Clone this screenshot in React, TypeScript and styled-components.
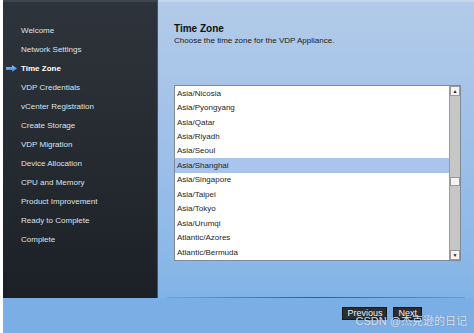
import { createGlobalStyle, styled } from "styled-components"

const GlobalStyle = createGlobalStyle`
  html, body {
    margin: 0;
    padding: 0;
    background: #ffffff;
  }
  body {
    font-family: "Liberation Sans", Arial, sans-serif;
  }
`

const Window = styled.div`
  width: 471px;
  height: 333px;
  margin-left: 3px;
  display: flex;
  flex-direction: column;
  background: linear-gradient(180deg, #b3cbe8 0%, #a3c2e8 35%, #8cb9e8 75%, #79aee7 100%);
  overflow: hidden;
  position: relative;
`

const Main = styled.div`
  height: 298px;
  display: flex;
`

const Sidebar = styled.nav`
  width: 155px;
  box-sizing: border-box;
  padding-top: 19px;
  background: linear-gradient(180deg, #2e343b 0%, #262b32 50%, #1c2026 100%);
  border-top: 2px solid #3e454d;
  border-right: 1px solid #4a525c;
  display: flex;
  flex-direction: column;
`

const Step = styled.div<{ $active?: boolean }>`
  height: 19px;
  display: flex;
  align-items: center;
  padding-left: 18px;
  position: relative;
  font-size: 8px;
  color: ${(p) => (p.$active ? "#ffffff" : "#dde2e8")};
  font-weight: ${(p) => (p.$active ? "bold" : "normal")};
`

const StepArrow = styled.svg`
  position: absolute;
  left: 3px;
  top: 6px;
`

const Content = styled.section`
  flex: 1;
  display: flex;
  flex-direction: column;
  padding: 22px 13px 0 16px;
  border-top: 2px solid #c6d7ec;
`

const Title = styled.h1`
  margin: 0;
  font-size: 10px;
  line-height: 12px;
  font-weight: bold;
  color: #111111;
  margin-top: -1px;
`

const Subtitle = styled.p`
  margin: 1px 0 0;
  font-size: 8px;
  line-height: 10px;
  color: #1a1a1a;
`

const ListBox = styled.div`
  margin-top: 39px;
  display: flex;
  border: 1px solid #7f8a96;
  background: #ffffff;
  height: 174px;
`

const Rows = styled.ul`
  flex: 1;
  margin: 0;
  padding: 0;
  list-style: none;
`

const Row = styled.li<{ $selected?: boolean }>`
  height: 14.45px;
  display: flex;
  align-items: center;
  padding-left: 2px;
  font-size: 8px;
  color: #1e1e1e;
  background: ${(p) => (p.$selected ? "#a9c5ed" : "transparent")};
`

const Scrollbar = styled.div`
  width: 10px;
  display: flex;
  flex-direction: column;
  background: #c6c6c6;
  border-left: 1px solid #9a9a9a;
`

const ScrollButton = styled.div`
  height: 10px;
  box-sizing: border-box;
  border: 1px solid #9a9a9a;
  background: #f4f4f4;
  display: flex;
  align-items: center;
  justify-content: center;
  font-size: 5px;
  color: #222;
  line-height: 1;
`

const Track = styled.div`
  flex: 1;
  display: flex;
  flex-direction: column;
  padding-top: 81px;
`

const Thumb = styled.div`
  height: 9px;
  box-sizing: border-box;
  border: 1px solid #9a9a9a;
  background: #f2f2f2;
`

const Divider = styled.div`
  margin-top: auto;
  margin-left: -7px;
  margin-right: -4px;
  height: 1px;
  background: linear-gradient(90deg, rgba(60, 100, 150, 0.2) 0%, #2f5d92 50%, rgba(60, 100, 150, 0.3) 100%);
`

const Footer = styled.footer`
  flex: 1;
  display: flex;
  justify-content: flex-end;
  align-items: flex-start;
  gap: 6px;
  padding: 9px 52px 0 0;
  background: #7caee6;
`

const Button = styled.button`
  height: 13px;
  padding: 0 4px;
  border: 1px solid #15181b;
  background: #2a2e33;
  color: #f2f2f2;
  font-family: "Liberation Sans", Arial, sans-serif;
  font-size: 9px;
  line-height: 11px;
`

const Watermark = styled.div`
  position: absolute;
  right: 7px;
  bottom: 5px;
  font-family: "Liberation Sans", "Noto Sans CJK SC", sans-serif;
  font-size: 11px;
  color: rgba(255, 255, 255, 0.8);
  text-shadow: 0 0 1px rgba(60, 80, 110, 0.6);
  pointer-events: none;
`

const steps = [
  "Welcome",
  "Network Settings",
  "Time Zone",
  "VDP Credentials",
  "vCenter Registration",
  "Create Storage",
  "VDP Migration",
  "Device Allocation",
  "CPU and Memory",
  "Product Improvement",
  "Ready to Complete",
  "Complete",
]

const zones = [
  "Asia/Nicosia",
  "Asia/Pyongyang",
  "Asia/Qatar",
  "Asia/Riyadh",
  "Asia/Seoul",
  "Asia/Shanghai",
  "Asia/Singapore",
  "Asia/Taipei",
  "Asia/Tokyo",
  "Asia/Urumqi",
  "Atlantic/Azores",
  "Atlantic/Bermuda",
]

const App = () => {
  return (
    <>
      <GlobalStyle />
      <Window>
        <Main>
          <Sidebar>
            {steps.map((s) => (
              <Step key={s} $active={s === "Time Zone"}>
                {s === "Time Zone" && (
                  <StepArrow width="11" height="7" viewBox="0 0 11 7">
                    <defs>
                      <linearGradient id="arr" x1="0" y1="0" x2="0" y2="1">
                        <stop offset="0" stopColor="#8cc4ff" />
                        <stop offset="1" stopColor="#2f7fe0" />
                      </linearGradient>
                    </defs>
                    <path d="M0 2 H6 V0 L11 3.5 L6 7 V5 H0 Z" fill="url(#arr)" />
                  </StepArrow>
                )}
                {s}
              </Step>
            ))}
          </Sidebar>
          <Content>
            <Title>Time Zone</Title>
            <Subtitle>Choose the time zone for the VDP Appliance.</Subtitle>
            <ListBox>
              <Rows>
                {zones.map((z) => (
                  <Row key={z} $selected={z === "Asia/Shanghai"}>
                    {z}
                  </Row>
                ))}
              </Rows>
              <Scrollbar>
                <ScrollButton>▲</ScrollButton>
                <Track>
                  <Thumb />
                </Track>
                <ScrollButton>▼</ScrollButton>
              </Scrollbar>
            </ListBox>
            <Divider />
          </Content>
        </Main>
        <Footer>
          <Button>Previous</Button>
          <Button>Next</Button>
        </Footer>
        <Watermark>CSDN @杰克逊的日记</Watermark>
      </Window>
    </>
  )
}

export default App
